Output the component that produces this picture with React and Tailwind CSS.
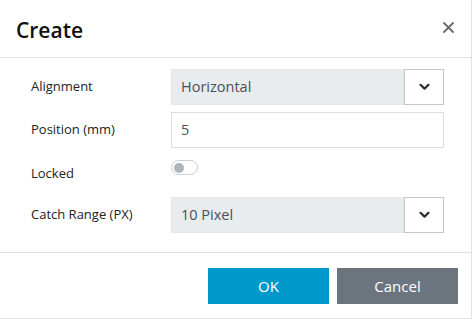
import React from "react";

function Chevron() {
  return (
    <svg width="11" height="8" viewBox="0 0 11 8" fill="none">
      <path d="M1.5 1.8 L5.5 5.6 L9.5 1.8" stroke="#2b2b2b" strokeWidth="2.2" strokeLinecap="round" strokeLinejoin="round" />
    </svg>
  );
}

function Select({ value }) {
  return (
    <div className="flex h-[36px] w-[273px]">
      <div className="flex flex-1 items-center border border-[#e3e6ea] bg-[#e9ecef] pl-[9px] text-[14.5px] text-[#495057]">
        {value}
      </div>
      <div className="flex w-[40px] items-center justify-center border border-[#c4c8cc] bg-white">
        <Chevron />
      </div>
    </div>
  );
}

export default function App() {
  return (
    <div
      className="relative h-[319px] w-[472px] border-r border-b border-[#e2e2e2] bg-white text-[#212529]"
      style={{ fontFamily: '"Open Sans", "Noto Sans", sans-serif' }}
    >
      <div className="flex h-[58px] items-center justify-between border-b border-[#e2e2e2] pl-[16px] pr-[17px]">
        <div className="text-[21px] font-semibold leading-none text-[#111] pt-[3px]">Create</div>
        <svg width="11" height="11" viewBox="0 0 11 11" className="mb-[3px]">
          <path d="M1 1 L10 10 M10 1 L1 10" stroke="#6b6b6b" strokeWidth="1.8" strokeLinecap="round" />
        </svg>
      </div>
      <div className="h-[195px] border-b border-[#e2e2e2] pl-[31px]">
        <div className="flex items-center pt-[11px]">
          <div className="w-[140px] text-[13px] text-[#222]">Alignment</div>
          <Select value="Horizontal" />
        </div>
        <div className="flex items-center pt-[7px]">
          <div className="w-[140px] text-[13px] text-[#222]">Position (mm)</div>
          <div className="flex h-[36px] w-[273px] items-center border border-[#dcdfe2] bg-white pl-[9px] text-[14.5px] text-[#495057]">
            5
          </div>
        </div>
        <div className="flex h-[49px]">
          <div className="w-[140px] pt-[16px] text-[13px] text-[#222]">Locked</div>
          <div className="pt-[12px]">
            <div className="flex h-[15px] w-[27px] items-center rounded-full border border-[#c9ced3] bg-white pl-[2px]">
              <div className="h-[10px] w-[10px] rounded-full bg-[#adb5bd]" />
            </div>
          </div>
        </div>
        <div className="flex items-center">
          <div className="w-[140px] text-[13px] text-[#222]">Catch Range (PX)</div>
          <Select value="10 Pixel" />
        </div>
      </div>
      <div className="flex justify-end gap-[8px] pr-[13px] pt-[15px]">
        <button className="flex h-[36px] w-[121px] items-center justify-center bg-[#0099cc] text-[15px] text-white">
          OK
        </button>
        <button className="flex h-[36px] w-[121px] items-center justify-center bg-[#6c757d] text-[15px] text-white">
          Cancel
        </button>
      </div>
    </div>
  );
}
